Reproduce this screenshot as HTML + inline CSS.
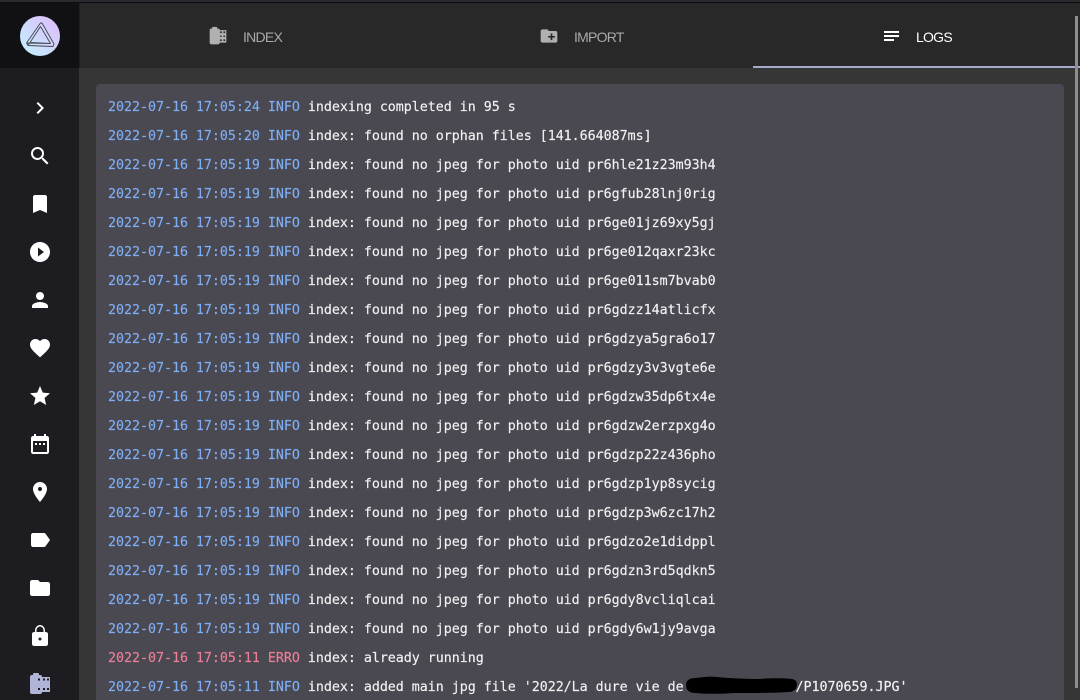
<!DOCTYPE html>
<html><head><meta charset="utf-8"><style>
html,body{margin:0;padding:0;width:1080px;height:700px;overflow:hidden;background:#363636}
*{box-sizing:border-box}
#root{position:relative;width:1080px;height:700px;overflow:hidden;background:#363636}
.abs{position:absolute}
#strip{left:0;top:0;width:1080px;height:3px;background:#2b2a30;border-bottom:1px solid #0c0c0e}
#logo{left:0;top:3px;width:79px;height:65px;background:#111113}
#side{left:0;top:68px;width:79px;height:632px;background:#1d1d21}
#sep{left:79px;top:3px;width:1px;height:65px;background:#1e1e1f}
#top{left:80px;top:3px;width:1000px;height:65px;background:#282828}
#ul{left:753px;top:66px;width:327px;height:2px;background:#a6abcd}
#sb{left:1075px;top:16px;width:3px;height:672px;background:#8e8e8e}
.tab{position:absolute;top:29px;font:14px/16px "Liberation Sans",sans-serif;letter-spacing:-.75px;color:#a9a9a9}
#panel{left:96px;top:84px;width:968px;height:616px;background:#4a4850;border-radius:4px 4px 0 0}
#log{left:108px;top:93px;font:13.33px/29px "DejaVu Sans Mono","Liberation Mono",monospace;letter-spacing:-.03px;color:#f2f2f2;white-space:pre;-webkit-text-stroke:.15px currentColor}
.i{color:#7eaef5}.e{color:#ed7f97}
svg.ic{position:absolute;fill:#fff}
</style></head><body><div id="root">
<div class="abs" id="strip"></div>
<div class="abs" id="logo"></div>
<div class="abs" id="side"></div>
<div class="abs" id="sep"></div>
<div class="abs" id="top"></div>
<div class="abs" id="panel"></div>
<div class="abs" id="log"><span class="i">2022-07-16 17:05:24 INFO</span> indexing completed in 95 s
<span class="i">2022-07-16 17:05:20 INFO</span> index: found no orphan files [141.664087ms]
<span class="i">2022-07-16 17:05:19 INFO</span> index: found no jpeg for photo uid pr6hle21z23m93h4
<span class="i">2022-07-16 17:05:19 INFO</span> index: found no jpeg for photo uid pr6gfub28lnj0rig
<span class="i">2022-07-16 17:05:19 INFO</span> index: found no jpeg for photo uid pr6ge01jz69xy5gj
<span class="i">2022-07-16 17:05:19 INFO</span> index: found no jpeg for photo uid pr6ge012qaxr23kc
<span class="i">2022-07-16 17:05:19 INFO</span> index: found no jpeg for photo uid pr6ge011sm7bvab0
<span class="i">2022-07-16 17:05:19 INFO</span> index: found no jpeg for photo uid pr6gdzz14atlicfx
<span class="i">2022-07-16 17:05:19 INFO</span> index: found no jpeg for photo uid pr6gdzya5gra6o17
<span class="i">2022-07-16 17:05:19 INFO</span> index: found no jpeg for photo uid pr6gdzy3v3vgte6e
<span class="i">2022-07-16 17:05:19 INFO</span> index: found no jpeg for photo uid pr6gdzw35dp6tx4e
<span class="i">2022-07-16 17:05:19 INFO</span> index: found no jpeg for photo uid pr6gdzw2erzpxg4o
<span class="i">2022-07-16 17:05:19 INFO</span> index: found no jpeg for photo uid pr6gdzp22z436pho
<span class="i">2022-07-16 17:05:19 INFO</span> index: found no jpeg for photo uid pr6gdzp1yp8sycig
<span class="i">2022-07-16 17:05:19 INFO</span> index: found no jpeg for photo uid pr6gdzp3w6zc17h2
<span class="i">2022-07-16 17:05:19 INFO</span> index: found no jpeg for photo uid pr6gdzo2e1didppl
<span class="i">2022-07-16 17:05:19 INFO</span> index: found no jpeg for photo uid pr6gdzn3rd5qdkn5
<span class="i">2022-07-16 17:05:19 INFO</span> index: found no jpeg for photo uid pr6gdy8vcliqlcai
<span class="i">2022-07-16 17:05:19 INFO</span> index: found no jpeg for photo uid pr6gdy6w1jy9avga
<span class="e">2022-07-16 17:05:11 ERRO</span> index: already running
<span class="i">2022-07-16 17:05:11 INFO</span> index: added main jpg file '2022/La dure vie de              /P1070659.JPG'</div>
<svg class="abs" style="left:684px;top:674px" width="116" height="22" viewBox="0 0 116 22"><path d="M2 11C2 6 6 4 12 4C20 3 26 2 32 3C42 4 60 5 75 5C88 4 100 4 108 5C112 6 113 8 113 10C113 15 110 18 104 18C90 19 70 19 50 19C35 20 22 20 12 19C5 19 2 16 2 11Z" fill="#000"/></svg>

<div class="abs" id="ul"></div>
<div class="abs" id="sb"></div>

<svg class="abs" style="left:20px;top:16px" width="40" height="40" viewBox="0 0 40 40">
<defs><linearGradient id="g" x1="0" y1="1" x2="1" y2="0"><stop offset="0" stop-color="#bff4ff"/><stop offset="1" stop-color="#e1b9fb"/></linearGradient></defs>
<circle cx="20" cy="20" r="20" fill="url(#g)"/>
<path d="M20.500 7 L6.500 27 L8 29.500 L33 30.500 L34 28 L22 7 Z M20.500 10.500 L10 26.500 L30.500 27.500 Z M6.500 27 L30.500 27.500 M8 29.500 L10 26.500" fill="none" stroke="#45454e" stroke-width=".9" stroke-linejoin="round"/>
</svg>

<svg class="ic" style="left:28px;top:96px" width="24" height="24" viewBox="0 0 24 24"><path d="M10 6 8.590 7.410 13.170 12l-4.580 4.590L10 18l6-6z"/></svg>
<svg class="ic" style="left:28px;top:144px" width="24" height="24" viewBox="0 0 24 24"><path d="M15.500 14h-.79l-.28-.27A6.471 6.471 0 0 0 16 9.500 6.500 6.500 0 1 0 9.500 16c1.610 0 3.090-.59 4.230-1.570l.27.28v.79l5 4.990L20.490 19l-4.990-5zm-6 0C7.010 14 5 11.990 5 9.500S7.010 5 9.500 5 14 7.010 14 9.500 11.990 14 9.500 14z"/></svg>
<svg class="ic" style="left:28px;top:192px" width="24" height="24" viewBox="0 0 24 24"><path d="M17 3H7c-1.100 0-2 .9-2 2v16l7-3 7 3V5c0-1.100-.9-2-2-2z"/></svg>
<svg class="ic" style="left:28px;top:240px" width="24" height="24" viewBox="0 0 24 24"><path d="M12 2C6.480 2 2 6.480 2 12s4.480 10 10 10 10-4.480 10-10S17.520 2 12 2zm-2 14.500v-9l6 4.500-6 4.500z"/></svg>
<svg class="ic" style="left:28px;top:288px" width="24" height="24" viewBox="0 0 24 24"><path d="M12 12c2.210 0 4-1.790 4-4s-1.790-4-4-4-4 1.790-4 4 1.790 4 4 4zm0 2c-2.670 0-8 1.340-8 4v2h16v-2c0-2.660-5.330-4-8-4z"/></svg>
<svg class="ic" style="left:28px;top:336px" width="24" height="24" viewBox="0 0 24 24"><path d="m12 21.350-1.450-1.320C5.400 15.360 2 12.280 2 8.500 2 5.420 4.420 3 7.500 3c1.740 0 3.410.81 4.500 2.090C13.090 3.810 14.760 3 16.500 3 19.580 3 22 5.420 22 8.500c0 3.780-3.400 6.860-8.550 11.540L12 21.350z"/></svg>
<svg class="ic" style="left:28px;top:384px" width="24" height="24" viewBox="0 0 24 24"><path d="M12 17.270 18.180 21l-1.640-7.030L22 9.240l-7.190-.61L12 2 9.190 8.630 2 9.240l5.460 4.730L5.820 21z"/></svg>
<svg class="ic" style="left:28px;top:432px" width="24" height="24" viewBox="0 0 24 24"><path d="M9 11H7v2h2v-2zm4 0h-2v2h2v-2zm4 0h-2v2h2v-2zm2-7h-1V2h-2v2H8V2H6v2H5c-1.110 0-1.990.9-1.990 2L3 20c0 1.100.89 2 2 2h14c1.100 0 2-.9 2-2V6c0-1.100-.9-2-2-2zm0 16H5V9h14v11z"/></svg>
<svg class="ic" style="left:28px;top:480px" width="24" height="24" viewBox="0 0 24 24"><path fill-rule="evenodd" d="M12 2C8.130 2 5 5.130 5 9c0 5.250 7 13 7 13s7-7.750 7-13c0-3.870-3.130-7-7-7zm0 5a2 2 0 1 1 0 4 2 2 0 0 1 0-4z"/></svg>
<svg class="ic" style="left:28px;top:528px" width="24" height="24" viewBox="0 0 24 24"><path d="M17.630 5.840C17.270 5.330 16.670 5 16 5L5 5.010C3.900 5.010 3 5.900 3 7v10c0 1.100.9 1.990 2 1.990L16 19c.67 0 1.270-.33 1.630-.84L22 12l-4.370-6.160z"/></svg>
<svg class="ic" style="left:28px;top:576px" width="24" height="24" viewBox="0 0 24 24"><path d="M10 4H4c-1.100 0-1.990.9-1.990 2L2 18c0 1.100.9 2 2 2h16c1.100 0 2-.9 2-2V8c0-1.100-.9-2-2-2h-8l-2-2z"/></svg>
<svg class="ic" style="left:28px;top:624px" width="24" height="24" viewBox="0 0 24 24"><path fill-rule="evenodd" d="M18 8h-1V6.500C17 3.700 14.800 1 12 1S7 3.700 7 6.500V8H6c-1.100 0-2 .9-2 2v10c0 1.100.9 2 2 2h12c1.100 0 2-.9 2-2V10c0-1.100-.9-2-2-2zM8.500 8V6.500C8.500 4.400 10 2.500 12 2.500s3.500 1.900 3.500 4V8h-7zM12 13.500a1.500 1.500 0 1 1 0 3 1.500 1.500 0 0 1 0-3z"/></svg>
<svg class="ic" style="left:28px;top:672px;fill:#b0b4d6" width="24" height="24" viewBox="0 0 24 24"><path fill-rule="evenodd" d="M5 3V2a1 1 0 0 1 1-1h4a1 1 0 0 1 1 1v1h1a2 2 0 0 1 2 2h8v15h-8a2 2 0 0 1-2 2H4a2 2 0 0 1-2-2V5a2 2 0 0 1 2-2zM10 6.500h2v2h-2zM15 6.500h2v2h-2zM19 6.500h2v2h-2zM10 16h2v2h-2zM15 16h2v2h-2zM19 16h2v2h-2z"/></svg>

<svg class="ic" style="left:208px;top:26px;fill:#b0b0b0" width="20" height="20" viewBox="0 0 24 24"><path fill-rule="evenodd" d="M5 3V2a1 1 0 0 1 1-1h4a1 1 0 0 1 1 1v1h1a2 2 0 0 1 2 2h8v15h-8a2 2 0 0 1-2 2H4a2 2 0 0 1-2-2V5a2 2 0 0 1 2-2zM14.500 6.500h2v2h-2zM18.500 6.500h2v2h-2zM14.500 11.500h2v1.500h-2zM18.500 11.500h2v1.500h-2zM14.500 16h2v2h-2zM18.500 16h2v2h-2z"/></svg>
<div class="tab" style="left:243px">INDEX</div>
<svg class="ic" style="left:539px;top:26px;fill:#b0b0b0" width="20" height="20" viewBox="0 0 24 24"><path d="M20 6h-8l-2-2H4c-1.110 0-1.990.89-1.990 2L2 18c0 1.110.89 2 2 2h16c1.110 0 2-.89 2-2V8c0-1.110-.89-2-2-2zm-1 8h-3v3h-2v-3h-3v-2h3V9h2v3h3v2z"/></svg>
<div class="tab" style="left:574px">IMPORT</div>
<svg class="ic" style="left:884px;top:30px" width="16" height="12" viewBox="0 0 16 12"><path d="M0 1h15v2H0zM0 5h15v2H0zM0 9h10v2H0z"/></svg>
<div class="tab" style="left:916px;color:#fff">LOGS</div>
</div></body></html>
